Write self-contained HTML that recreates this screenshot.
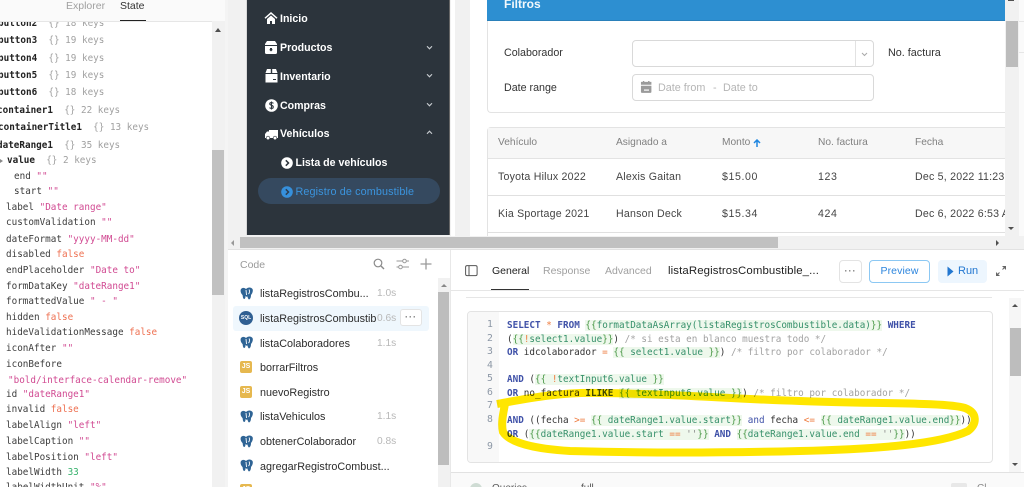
<!DOCTYPE html>
<html><head><meta charset="utf-8"><style>
html,body{margin:0;padding:0;width:1024px;height:487px;overflow:hidden;background:#fff}
#w{width:1024px;height:487px;overflow:hidden;position:relative;background:#fff;font-family:"Liberation Sans",sans-serif;color:#1f1f1f}
.a{position:absolute}
.t{position:absolute;white-space:pre;line-height:14px}
.m{position:absolute;white-space:pre;line-height:14px;font-family:"DejaVu Sans Mono","Liberation Mono",monospace;font-size:9.3px;color:#3c3c3c}
.k{font-weight:700;color:#222}
.g{color:#a0a0a0}
.s{color:#d14a92}
.b{color:#ee7152}
.n{color:#37b26c}
.c{position:absolute;white-space:pre;line-height:13px;left:507px;font-family:"DejaVu Sans Mono","Liberation Mono",monospace;font-size:9.3px;color:#333}
.kw{color:#3f51a8;font-weight:700}
.kl{color:#3f51a8}
.op{color:#ee7a3c}
.cm{color:#a2a2a2}
.h{background:#eef8ec;color:#36906a}
.h i{font-style:normal;color:#4d9a4a}
.nav{position:absolute;white-space:pre;font-size:10.6px;font-weight:700;color:#fff;line-height:14px}
.chev{position:absolute;left:426px;width:7px;height:5px}
.th{position:absolute;white-space:pre;font-size:10.2px;color:#808080;top:136px;line-height:14px}
.td{position:absolute;white-space:pre;font-size:10.6px;letter-spacing:.22px;color:#444;line-height:14px}
.nm{letter-spacing:.6px}
.q{position:absolute;left:260px;white-space:pre;font-size:10.8px;color:#2c2c2c;line-height:14px}
.d{position:absolute;left:377px;font-size:10.2px;color:#b8b8b8;line-height:14px}
.js{position:absolute;left:240px;width:12px;height:12px;border-radius:2px;background:#e6b84f;color:#fff;font-size:7px;font-weight:700;line-height:12px;text-align:center}
</style></head><body><div id="w">

<svg width="0" height="0" style="position:absolute"><defs>
<g id="pg"><path d="M1 2C3 0 5 1 6 2C8 0 11 0 12.500 2C13.500 4 12 7 11 8C11 10 10.500 12 9 12.500C8 12 7.500 10 7.500 9.500C6.500 10 6 9.500 5.500 9C5.500 11 5 12 4 12C2.500 11 3 9 2.500 8C1 6.500 0 4 1 2Z" fill="#2f6495"/><path d="M6 3L6.500 8M9 2.500C10 4 9.500 6 8.500 7" stroke="#fff" stroke-width=".9" fill="none"/></g>
</defs></svg>

<!-- LEFT PANEL -->
<div class="a" style="left:0;top:1px;width:212px;height:486px">
<div class="m" style="left:-2px;top:16px"><span class="k">button2</span>  <span class="g">{} 18 keys</span></div>
<div class="m" style="left:-2px;top:33px"><span class="k">button3</span>  <span class="g">{} 19 keys</span></div>
<div class="m" style="left:-2px;top:51px"><span class="k">button4</span>  <span class="g">{} 19 keys</span></div>
<div class="m" style="left:-2px;top:68px"><span class="k">button5</span>  <span class="g">{} 19 keys</span></div>
<div class="m" style="left:-2px;top:85px"><span class="k">button6</span>  <span class="g">{} 18 keys</span></div>
<div class="m" style="left:-3px;top:103px"><span class="k">container1</span>  <span class="g">{} 22 keys</span></div>
<div class="m" style="left:-2px;top:120px"><span class="k">containerTitle1</span>  <span class="g">{} 13 keys</span></div>
<div class="m" style="left:-3px;top:138px"><span class="k">dateRange1</span>  <span class="g">{} 35 keys</span></div>
<div class="a" style="left:0;top:158px;border:2px solid transparent;border-left:3px solid #888"></div>
<div class="m" style="left:7px;top:153px"><span class="k">value</span>  <span class="g">{} 2 keys</span></div>
<div class="m" style="left:14px;top:169px">end <span class="s">""</span></div>
<div class="m" style="left:14px;top:184px">start <span class="s">""</span></div>
<div class="m" style="left:6px;top:200px">label <span class="s">"Date range"</span></div>
<div class="m" style="left:6px;top:215px">customValidation <span class="s">""</span></div>
<div class="m" style="left:6px;top:232px">dateFormat <span class="s">"yyyy-MM-dd"</span></div>
<div class="m" style="left:6px;top:247px">disabled <span class="b">false</span></div>
<div class="m" style="left:6px;top:263px">endPlaceholder <span class="s">"Date to"</span></div>
<div class="m" style="left:6px;top:279px">formDataKey <span class="s">"dateRange1"</span></div>
<div class="m" style="left:6px;top:294px">formattedValue <span class="s">" - "</span></div>
<div class="m" style="left:6px;top:310px">hidden <span class="b">false</span></div>
<div class="m" style="left:6px;top:325px">hideValidationMessage <span class="b">false</span></div>
<div class="m" style="left:6px;top:341px">iconAfter <span class="s">""</span></div>
<div class="m" style="left:6px;top:357px">iconBefore</div>
<div class="m" style="left:8px;top:373px"><span class="s">"bold/interface-calendar-remove"</span></div>
<div class="m" style="left:6px;top:387px">id <span class="s">"dateRange1"</span></div>
<div class="m" style="left:6px;top:402px">invalid <span class="b">false</span></div>
<div class="m" style="left:6px;top:418px">labelAlign <span class="s">"left"</span></div>
<div class="m" style="left:6px;top:434px">labelCaption <span class="s">""</span></div>
<div class="m" style="left:6px;top:450px">labelPosition <span class="s">"left"</span></div>
<div class="m" style="left:6px;top:465px">labelWidth <span class="n">33</span></div>
<div class="m" style="left:6px;top:480px">labelWidthUnit <span class="s">"%"</span></div>
</div>
<div class="a" style="left:0;top:0;width:226px;height:21px;background:#fafafa;border-bottom:1px solid #e6e6e6"></div>
<div class="t" style="left:66px;top:-1px;font-size:10.500px;color:#a0a0a0">Explorer</div>
<div class="t" style="left:120px;top:-1px;font-size:10.500px;color:#333">State</div>
<div class="a" style="left:120px;top:19.500px;width:26px;height:1.500px;background:#222"></div>
<div class="a" style="left:212px;top:21px;width:13px;height:466px;background:#f1f1f1"></div>
<div class="a" style="left:212px;top:150px;width:12px;height:145px;background:#c1c1c1"></div>
<div class="a" style="left:215px;top:28px;border:3px solid transparent;border-bottom:4px solid #505050;border-top:0"></div>
<div class="a" style="left:225px;top:0;width:3px;height:487px;background:#f4f4f4"></div>

<!-- CANVAS -->
<div class="a" style="left:228px;top:0;width:796px;height:236px;background:#f1f1f1"></div>
<div class="a" style="left:246px;top:0;width:204px;height:235px;background:#2c343c;border-left:1px solid #d9d9d9;border-right:1px solid #666;box-sizing:border-box"></div>
<div class="a" style="left:451px;top:0;width:4px;height:236px;background:#fff"></div>
<div class="a" style="left:470px;top:0;width:535px;height:236px;background:#fff"></div>

<svg class="a" style="left:264px;top:11px" width="14" height="14" viewBox="0 0 14 14"><path d="M.5 6.800L7 1L13.500 6.800L12.500 7.800L7 3L1.500 7.800Z M3 8L7 4.500L11 8V13H8V10H6V13H3Z" fill="#fff"/></svg>
<div class="nav" style="left:280px;top:12px">Inicio</div>
<svg class="a" style="left:264px;top:41px" width="14" height="13" viewBox="0 0 14 13"><path d="M3 0H11L13 3V4H1V3Z M1 5H13V11.500Q13 13 11.500 13H2.500Q1 13 1 11.500Z" fill="#fff"/><path d="M6 7H8V8.500H9L7 10.500L5 8.500H6Z" fill="#2c343c"/></svg>
<div class="nav" style="left:280px;top:41px">Productos</div>
<svg class="a" style="left:265px;top:69px" width="13" height="14" viewBox="0 0 13 14"><path d="M2 0H5.800V4H0.500ZM7.200 0H11L12.500 4H7.200Z M.5 5H12.500V13.500H.5Z" fill="#fff"/><path d="M8 10H11V11H8Z" fill="#2c343c"/></svg>
<div class="nav" style="left:280px;top:70px">Inventario</div>
<svg class="a" style="left:264.500px;top:98.500px" width="13" height="13" viewBox="0 0 13 13"><circle cx="6.500" cy="6.500" r="6.300" fill="#fff"/><path d="M8.500 4.300Q6.500 3 5 4Q4 5.500 6.500 6.300Q9 7 8 9Q6.500 10 4.500 8.700M6.500 2.500V10.500" stroke="#2c343c" stroke-width="1.100" fill="none"/></svg>
<div class="nav" style="left:280px;top:99px">Compras</div>
<svg class="a" style="left:265px;top:129px" width="13" height="11" viewBox="0 0 13 11"><path d="M4 1H13V9H0V5L2 2.500H4Z" fill="#fff"/><circle cx="3" cy="9" r="1.800" fill="#fff" stroke="#2c343c" stroke-width=".6"/><circle cx="10" cy="9" r="1.800" fill="#fff" stroke="#2c343c" stroke-width=".6"/></svg>
<div class="nav" style="left:280px;top:127px">Vehículos</div>
<svg class="chev" style="top:45px" viewBox="0 0 7 5"><path d="M1 1.200L3.500 3.800L6 1.200" stroke="#c8ccd0" stroke-width="1.100" fill="none"/></svg>
<svg class="chev" style="top:73px" viewBox="0 0 7 5"><path d="M1 1.200L3.500 3.800L6 1.200" stroke="#c8ccd0" stroke-width="1.100" fill="none"/></svg>
<svg class="chev" style="top:102px" viewBox="0 0 7 5"><path d="M1 1.200L3.500 3.800L6 1.200" stroke="#c8ccd0" stroke-width="1.100" fill="none"/></svg>
<svg class="chev" style="top:130px" viewBox="0 0 7 5"><path d="M1 3.800L3.500 1.200L6 3.800" stroke="#c8ccd0" stroke-width="1.100" fill="none"/></svg>
<svg class="a" style="left:280.500px;top:156.500px" width="12" height="12" viewBox="0 0 12 12"><circle cx="6" cy="6" r="5.800" fill="#fff"/><path d="M4.800 3.300L7.500 6L4.800 8.700" stroke="#2c343c" stroke-width="1.500" fill="none"/></svg>
<div class="nav" style="left:295.500px;top:156px">Lista de vehículos</div>
<div class="a" style="left:258px;top:178px;width:182px;height:26px;border-radius:13px;background:#35495f"></div>
<svg class="a" style="left:280.500px;top:185.500px" width="12" height="12" viewBox="0 0 12 12"><circle cx="6" cy="6" r="5.800" fill="#3690dc"/><path d="M4.800 3.300L7.500 6L4.800 8.700" stroke="#2c3e52" stroke-width="1.500" fill="none"/></svg>
<div class="nav" style="left:295.500px;top:184.500px;font-weight:400;font-size:10.800px;color:#3b94dd;letter-spacing:.12px">Registro de combustible</div>

<div class="a" style="left:487px;top:0;width:518px;height:20px;background:#2d8fd1;border-bottom:1px solid #2a80ba"></div>
<div class="t" style="left:504px;top:-3px;font-size:12px;font-weight:700;color:#f2f8fc">Filtros</div>
<div class="a" style="left:487px;top:21px;width:518px;height:92px;background:#fff;border:1px solid #e3e3e3;border-top:0;border-right:0;border-radius:0 0 0 4px;box-sizing:border-box"></div>
<div class="t" style="left:504px;top:46px;font-size:10.700px;color:#333">Colaborador</div>
<div class="a" style="left:632px;top:40px;width:242px;height:27px;border:1px solid #d9d9d9;border-radius:4px;box-sizing:border-box"></div>
<div class="a" style="left:855px;top:41px;width:1px;height:25px;background:#e2e2e2"></div>
<svg class="a" style="left:861px;top:52px" width="7" height="5" viewBox="0 0 7 5"><path d="M1 1L3.500 3.500L6 1" stroke="#a8a8a8" stroke-width="1" fill="none"/></svg>
<div class="t" style="left:888px;top:46px;font-size:10.800px;color:#333">No. factura</div>
<div class="t" style="left:504px;top:81px;font-size:10.700px;color:#333">Date range</div>
<div class="a" style="left:632px;top:74px;width:242px;height:27px;border:1px solid #d9d9d9;border-radius:4px;box-sizing:border-box"></div>
<svg class="a" style="left:640px;top:81px" width="13" height="13" viewBox="0 0 13 13"><path d="M3 0H4.500V1.500H8.500V0H10V1.500H12V4.500H1V1.500H3Z M1 5.500H12V12Q12 13 11 13H2Q1 13 1 12Z" fill="#9a9a9a" transform="translate(0,-.5) scale(.95)"/><path d="M4 8.500H9V9.700H4Z" fill="#fff"/></svg>
<div class="t" style="left:658px;top:81px;font-size:10.800px;color:#b5b5b5">Date from</div>
<div class="t" style="left:713px;top:81px;font-size:10.800px;color:#b5b5b5">-</div>
<div class="t" style="left:723px;top:81px;font-size:10.800px;color:#b5b5b5">Date to</div>

<div class="a" style="left:487px;top:127px;width:518px;height:109px;background:#fff;border:1px solid #e3e3e3;border-right:0;border-bottom:0;border-radius:4px 0 0 0;box-sizing:border-box"></div>
<div class="a" style="left:488px;top:128px;width:517px;height:31px;background:#f7f7f7;border-bottom:1px solid #e3e3e3;box-sizing:border-box"></div>
<div class="a" style="left:488px;top:195px;width:517px;height:1px;background:#e0e0e0"></div>
<div class="a" style="left:488px;top:232px;width:517px;height:1px;background:#e0e0e0"></div>
<div class="th" style="left:498px">Vehículo</div>
<div class="th" style="left:616px">Asignado a</div>
<div class="th" style="left:722px">Monto</div>
<svg class="a" style="left:753px;top:139px" width="8" height="9" viewBox="0 0 8 9"><path d="M4 8V1.500M1 4L4 1L7 4" stroke="#1f86e0" stroke-width="1.500" fill="none"/></svg>
<div class="th" style="left:818px">No. factura</div>
<div class="th" style="left:915px">Fecha</div>
<div class="td" style="left:498px;top:170px">Toyota Hilux 2022</div>
<div class="td" style="left:616px;top:170px">Alexis Gaitan</div>
<div class="td nm" style="left:722px;top:170px">$15.00</div>
<div class="td nm" style="left:818px;top:170px">123</div>
<div class="td" style="left:915px;top:170px;width:90px;overflow:hidden">Dec 5, 2022 11:23 AM</div>
<div class="td" style="left:498px;top:207px">Kia Sportage 2021</div>
<div class="td" style="left:616px;top:207px">Hanson Deck</div>
<div class="td nm" style="left:722px;top:207px">$15.34</div>
<div class="td nm" style="left:818px;top:207px">424</div>
<div class="td" style="left:915px;top:207px;width:90px;overflow:hidden">Dec 6, 2022 6:53 AM</div>

<!-- canvas scrollbars -->
<div class="a" style="left:1005px;top:0;width:14px;height:236px;background:#f1f1f1"></div>
<div class="a" style="left:1006px;top:21px;width:12px;height:46px;background:#bcbcbc"></div>
<div class="a" style="left:1008px;top:0;width:6px;height:1px;background:#505050"></div>
<div class="a" style="left:1019px;top:0;width:5px;height:236px;background:#fafafa"></div>
<div class="a" style="left:1019px;top:21px;width:5px;height:1px;background:#e6e6e6"></div>
<div class="a" style="left:1019px;top:52px;width:5px;height:1px;background:#e6e6e6"></div>
<div class="a" style="left:1008px;top:227px;border:3px solid transparent;border-top:3px solid #505050;border-bottom:0"></div>
<div class="a" style="left:228px;top:236px;width:796px;height:13px;background:#f1f1f1"></div>
<div class="a" style="left:240px;top:237px;width:538px;height:11px;background:#c1c1c1"></div>
<div class="a" style="left:231px;top:240px;border:3px solid transparent;border-right:3px solid #999;border-left:0"></div>
<div class="a" style="left:996px;top:240px;border:3px solid transparent;border-left:3px solid #505050;border-right:0"></div>
<div class="a" style="left:228px;top:249px;width:796px;height:1px;background:#e2e2e2"></div>

<!-- CODE LIST -->
<div class="a" style="left:228px;top:250px;width:222px;height:237px;background:#fff"></div>
<div class="a" style="left:450px;top:250px;width:1px;height:237px;background:#e8e8e8"></div>
<div class="t" style="left:240px;top:258px;font-size:10.500px;color:#9a9a9a">Code</div>
<svg class="a" style="left:373px;top:258px" width="12" height="12" viewBox="0 0 12 12"><circle cx="5" cy="5" r="3.800" stroke="#8a8a8a" stroke-width="1.200" fill="none"/><path d="M8 8L11 11" stroke="#8a8a8a" stroke-width="1.400"/></svg>
<svg class="a" style="left:396px;top:258px" width="13" height="12" viewBox="0 0 13 12"><path d="M.5 3H13M.5 9H13" stroke="#9a9a9a" stroke-width="1"/><circle cx="8.500" cy="3" r="1.800" fill="#fff" stroke="#9a9a9a"/><circle cx="4.500" cy="9" r="1.800" fill="#fff" stroke="#9a9a9a"/></svg>
<svg class="a" style="left:420px;top:258px" width="12" height="12" viewBox="0 0 12 12"><path d="M6 .5V11.500M.5 6H11.500" stroke="#9a9a9a" stroke-width="1.300"/></svg>
<div class="a" style="left:438px;top:278px;width:12px;height:209px;background:#f1f1f1"></div>
<div class="a" style="left:438px;top:292px;width:11px;height:173px;background:#bdbdbd"></div>
<div class="a" style="left:441px;top:284px;border:3px solid transparent;border-bottom:3px solid #888;border-top:0"></div>

<div class="a" style="left:233px;top:306px;width:196px;height:25px;border-radius:3px;background:#eff7fd"></div>
<svg class="a" style="left:240px;top:287px" width="14" height="13" viewBox="0 0 14 13"><use href="#pg"/></svg>
<div class="q" style="top:287px">listaRegistrosCombu...</div><div class="d" style="top:287px">1.0s</div>
<div class="a" style="left:239px;top:311px;width:14px;height:14px;border-radius:7px;background:#2f5f92;color:#fff;font-size:5px;font-weight:700;text-align:center;line-height:14px">SQL</div>
<div class="q" style="top:312px;width:117px;overflow:hidden">listaRegistrosCombustible</div><div class="d" style="top:312px">0.6s</div>
<div class="a" style="left:400px;top:309px;width:22px;height:17px;background:#fff;border:1px solid #e4e4e4;border-radius:3px;box-sizing:border-box;color:#777;font-size:9px;line-height:14px;text-align:center;font-weight:700;letter-spacing:1px">···</div>
<svg class="a" style="left:240px;top:336px" width="14" height="13" viewBox="0 0 14 13"><use href="#pg"/></svg>
<div class="q" style="top:337px">listaColaboradores</div><div class="d" style="top:337px">1.1s</div>
<div class="js" style="top:361px">JS</div>
<div class="q" style="top:361px">borrarFiltros</div>
<div class="js" style="top:386px">JS</div>
<div class="q" style="top:386px">nuevoRegistro</div>
<svg class="a" style="left:240px;top:410px" width="14" height="13" viewBox="0 0 14 13"><use href="#pg"/></svg>
<div class="q" style="top:410px">listaVehiculos</div><div class="d" style="top:410px">1.1s</div>
<svg class="a" style="left:240px;top:435px" width="14" height="13" viewBox="0 0 14 13"><use href="#pg"/></svg>
<div class="q" style="top:435px">obtenerColaborador</div><div class="d" style="top:435px">0.8s</div>
<svg class="a" style="left:240px;top:459px" width="14" height="13" viewBox="0 0 14 13"><use href="#pg"/></svg>
<div class="q" style="top:460px">agregarRegistroCombust...</div>
<div class="js" style="top:484px">JS</div>

<!-- EDITOR HEADER -->
<svg class="a" style="left:465px;top:265px" width="13" height="12" viewBox="0 0 13 12"><rect x=".6" y=".6" width="11.500" height="10" rx="1.500" stroke="#555" stroke-width="1" fill="none"/><path d="M4 1V10.500" stroke="#555" stroke-width="1"/></svg>
<div class="t" style="left:492px;top:264px;font-size:10.500px;color:#222">General</div>
<div class="a" style="left:491px;top:289px;width:38px;height:2px;background:#333"></div>
<div class="t" style="left:543px;top:264px;font-size:10.500px;color:#a0a0a0">Response</div>
<div class="t" style="left:605px;top:264px;font-size:10.500px;color:#a0a0a0">Advanced</div>
<div class="t" style="left:668px;top:264px;font-size:11.400px;color:#222;letter-spacing:.12px">listaRegistrosCombustible_...</div>
<div class="a" style="left:839px;top:260px;width:23px;height:23px;border:1px solid #e3e3e3;border-radius:4px;box-sizing:border-box;color:#777;font-size:9px;font-weight:700;text-align:center;line-height:20px;letter-spacing:1px">···</div>
<div class="a" style="left:869px;top:260px;width:61px;height:23px;border:1px solid #8cc8f3;border-radius:4px;box-sizing:border-box;color:#2c85dd;font-size:10.500px;text-align:center;line-height:21px;letter-spacing:.1px">Preview</div>
<div class="a" style="left:938px;top:260px;width:49px;height:23px;background:#edf6fe;border-radius:4px"></div>
<svg class="a" style="left:947px;top:266px" width="7" height="11" viewBox="0 0 7 11"><path d="M.5 .5L6.500 5.500L.5 10.500Z" fill="#2277d0"/></svg>
<div class="t" style="left:958px;top:264px;font-size:11px;color:#2277d0">Run</div>
<svg class="a" style="left:995px;top:265px" width="12" height="12" viewBox="0 0 12 12"><path d="M7 1H11V5Z M1 7V11H5Z" fill="#666"/><path d="M9 3L7.500 4.500M3 9L4.500 7.500" stroke="#666" stroke-width="1"/></svg>
<div class="a" style="left:451px;top:290px;width:573px;height:1px;background:#e6e6e6"></div>
<div class="a" style="left:466px;top:297px;width:526px;height:1px;background:#e6e6e6"></div>

<!-- EDITOR -->
<div class="a" style="left:467px;top:311px;width:526px;height:152px;border:1px solid #e3e3e3;border-radius:4px;box-sizing:border-box;background:#fff"></div>
<div class="a" style="left:468px;top:312px;width:31px;height:150px;background:#f8f8f8;border-radius:3px 0 0 3px"></div>
<div class="m" style="left:487px;top:318px;color:#8d98a6;font-size:9.800px">1</div>
<div class="m" style="left:487px;top:332px;color:#8d98a6;font-size:9.800px">2</div>
<div class="m" style="left:487px;top:345px;color:#8d98a6;font-size:9.800px">3</div>
<div class="m" style="left:487px;top:359px;color:#8d98a6;font-size:9.800px">4</div>
<div class="m" style="left:487px;top:372px;color:#8d98a6;font-size:9.800px">5</div>
<div class="m" style="left:487px;top:386px;color:#8d98a6;font-size:9.800px">6</div>
<div class="m" style="left:487px;top:399px;color:#8d98a6;font-size:9.800px">7</div>
<div class="m" style="left:487px;top:413px;color:#8d98a6;font-size:9.800px">8</div>
<div class="m" style="left:487px;top:440px;color:#8d98a6;font-size:9.800px">9</div>

<div class="c" style="top:319px"><span class="kw">SELECT</span> <span class="op">*</span> <span class="kw">FROM</span> <span class="h"><i>{{</i>formatDataAsArray(listaRegistrosCombustible.data)<i>}}</i></span> <span class="kw">WHERE</span></div>
<div class="c" style="top:333px">(<span class="h"><i>{{</i><span class="op">!</span>select1.value<i>}}</i></span>) <span class="cm">/* si esta en blanco muestra todo */</span></div>
<div class="c" style="top:346px"><span class="kw">OR</span> idcolaborador <span class="op">=</span> <span class="h"><i>{{</i> select1.value <i>}}</i></span>) <span class="cm">/* filtro por colaborador */</span></div>
<div class="c" style="top:373px"><span class="kw">AND</span> (<span class="h"><i>{{</i> <span class="op">!</span>textInput6.value <i>}}</i></span></div>
<div class="c" style="top:387px"><span class="kw">OR</span> no_factura <span class="kw">ILIKE</span> <span class="h"><i>{{</i> textInput6.value <i>}}</i></span>) <span class="cm">/* filtro por colaborador */</span></div>
<div class="c" style="top:414px"><span class="kw">AND</span> ((fecha <span class="op">&gt;=</span> <span class="h"><i>{{</i> dateRange1.value.start<i>}}</i></span> <span class="kl">and</span> fecha <span class="op">&lt;=</span> <span class="h"><i>{{</i> dateRange1.value.end<i>}}</i></span>))</div>
<div class="c" style="top:428px"><span class="kw">OR</span> (<span class="h"><i>{{</i>dateRange1.value.start <span class="op">==</span> <span style="color:#888">''</span><i>}}</i></span> <span class="kw">AND</span> <span class="h"><i>{{</i>dateRange1.value.end <span class="op">==</span> <span style="color:#888">''</span><i>}}</i></span>))</div>

<!-- yellow marker -->
<svg class="a" style="left:0;top:0;mix-blend-mode:multiply" width="1024" height="487" viewBox="0 0 1024 487"><path d="M497 404C530 398 560 392 600 393C680 394 730 399 800 401C870 404 945 402 965 408C978 413 977 424 968 431C940 444 880 449 800 451C720 453 640 453 570 451C535 449 510 443 503 432C501 424 503 414 505 404" stroke="#ffe600" stroke-width="8" fill="none" stroke-linecap="butt"/></svg>

<!-- editor scrollbar -->
<div class="a" style="left:1009px;top:298px;width:12px;height:174px;background:#f6f6f6"></div>
<div class="a" style="left:1010px;top:328px;width:11px;height:48px;background:#bdbdbd"></div>
<div class="a" style="left:1012px;top:304px;border:3px solid transparent;border-bottom:3px solid #505050;border-top:0"></div>
<div class="a" style="left:1012px;top:463px;border:3px solid transparent;border-top:3px solid #505050;border-bottom:0"></div>

<!-- bottom strip -->
<div class="a" style="left:451px;top:472px;width:573px;height:15px;background:#fafafa;border-top:1.500px solid #e2e2e2;box-sizing:border-box"></div>
<div class="a" style="left:470px;top:483px;width:12px;height:12px;border-radius:6px;background:#cfdcd4"></div>
<div class="t" style="left:492px;top:482px;font-size:10px;color:#555">Queries</div>
<div class="t" style="left:581px;top:482px;font-size:10px;color:#555">full</div>
<div class="a" style="left:951px;top:483px;width:16px;height:8px;background:#e8e8e8;border-radius:2px"></div>
<div class="t" style="left:977px;top:482px;font-size:10px;color:#888">Cl</div>
</div></body></html>
